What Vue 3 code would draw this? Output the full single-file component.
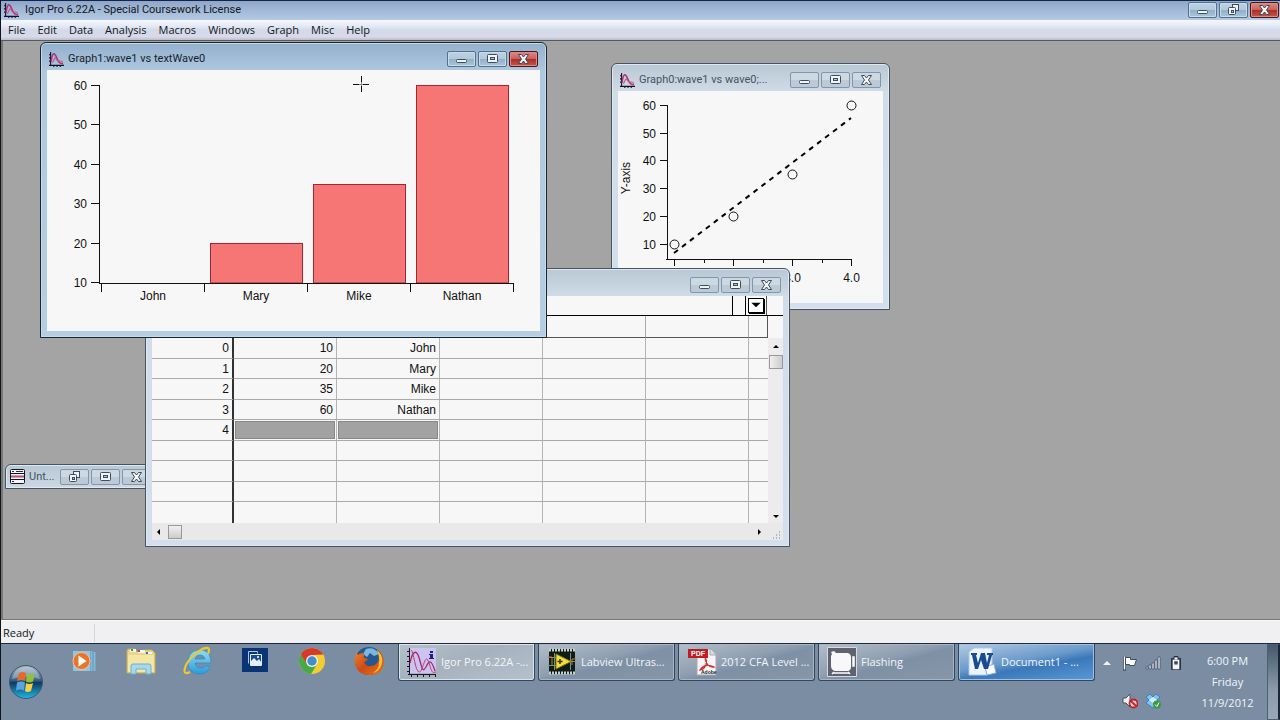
<script setup>
const menus = ['File', 'Edit', 'Data', 'Analysis', 'Macros', 'Windows', 'Graph', 'Misc', 'Help']

const bars = [
  { name: 'John', value: 10 },
  { name: 'Mary', value: 20 },
  { name: 'Mike', value: 35 },
  { name: 'Nathan', value: 60 }
]
const yTicks = [10, 20, 30, 40, 50, 60]
const barY = v => Math.floor(251.9 - v * 3.94) + 0.5
const barX = i => 60.5 + 103 * i

const points = [
  { x: 1, y: 10 },
  { x: 2, y: 20 },
  { x: 3, y: 35 },
  { x: 4, y: 60 }
]
const scatterX = v => 59 * v - 2.5
const scatterY = v => Math.floor(181 - v * 2.78) + 0.5

const rows = [
  { n: 0, value: '10', name: 'John' },
  { n: 1, value: '20', name: 'Mary' },
  { n: 2, value: '35', name: 'Mike' },
  { n: 3, value: '60', name: 'Nathan' },
  { n: 4, value: '', name: '', selected: true },
  {}, {}, {}, {}
]

const tasks = [
  { label: 'Igor Pro 6.22A -...', icon: 'igor', state: 'active' },
  { label: 'Labview Ultras...', icon: 'labview', state: '' },
  { label: '2012 CFA Level ...', icon: 'pdf', state: '' },
  { label: 'Flashing', icon: 'camera', state: '' },
  { label: 'Document1 - ...', icon: 'word', state: 'alert' }
]
const launchers = [
  { id: 'player', label: 'Media Player' },
  { id: 'folder', label: 'Explorer' },
  { id: 'ie', label: 'Internet Explorer' },
  { id: 'pictures', label: 'Pictures' },
  { id: 'chrome', label: 'Chrome' },
  { id: 'firefox', label: 'Firefox' }
]
const controls = [
  { id: 'min', label: 'Minimize' },
  { id: 'max', label: 'Maximize' },
  { id: 'close', label: 'Close' }
]
const restoreControls = [
  { id: 'restore', label: 'Restore' },
  { id: 'max', label: 'Maximize' },
  { id: 'close', label: 'Close' }
]
const appControls = [
  { id: 'min', label: 'Minimize' },
  { id: 'restore', label: 'Restore' },
  { id: 'close', label: 'Close' }
]
</script>

<template>
  <div class="screen">
    <svg class="defs" aria-hidden="true">
      <defs>
        <linearGradient id="orb-fill" x1="0" y1="0" x2="0" y2="1">
          <stop offset="0" stop-color="#a9bccb" />
          <stop offset="0.45" stop-color="#3a6080" />
          <stop offset="0.52" stop-color="#0e3a5c" />
          <stop offset="1" stop-color="#1fb8e8" />
        </linearGradient>
        <linearGradient id="ie-fill" x1="0" y1="0" x2="0" y2="1">
          <stop offset="0" stop-color="#8fdcf6" />
          <stop offset="1" stop-color="#2a9bdc" />
        </linearGradient>
        <linearGradient id="fox-fill" x1="0" y1="0" x2="1" y2="1">
          <stop offset="0" stop-color="#f08a2a" />
          <stop offset="0.5" stop-color="#cf4a14" />
          <stop offset="1" stop-color="#e8781c" />
        </linearGradient>
      </defs>
      <symbol id="g-graph" viewBox="0 0 14 14">
        <path d="M1.500 0v13M0 12.500h14M0 2.500h2M0 5.500h2M0 8.500h2M4.500 12v2M7.500 12v2M10.500 12v2" stroke="#15102a" fill="none" />
        <path d="M2 9C3 0 5 0 7 5s3 6 6 6" stroke="#b03070" fill="none" stroke-width="1.400" />
        <path d="M3 10C5 8 5 3 7 7s4-1 6 3" stroke="#c0588c" fill="none" />
      </symbol>
      <symbol id="g-table" viewBox="0 0 15 15">
        <rect x="0.500" y="0.500" width="14" height="14" rx="1" fill="#f4f4f8" stroke="#141424" />
        <path d="M1 4.500h13M1 10.500h13" stroke="#141424" />
        <path d="M1 7.500h13" stroke="#b05060" stroke-width="2" />
        <path d="M2 2.500h2M6 2.500h7M2 12.500h2" stroke="#29293d" />
      </symbol>
      <symbol id="g-min" viewBox="0 0 27 14">
        <rect x="8.500" y="7.500" width="10" height="3" rx="1" fill="#eef4f8" stroke="#3d4c5c" />
      </symbol>
      <symbol id="g-max" viewBox="0 0 27 14">
        <rect x="8.500" y="2.500" width="10" height="8" rx="1" fill="#eef4f8" stroke="#3d4c5c" />
        <rect x="11.500" y="5.500" width="4" height="2" fill="#b5c5d2" stroke="#3d4c5c" />
      </symbol>
      <symbol id="g-restore" viewBox="0 0 27 14">
        <rect x="12.500" y="1.500" width="6" height="6" fill="#eef4f8" stroke="#3d4c5c" />
        <rect x="8.500" y="4.500" width="7" height="7" rx="1" fill="#eef4f8" stroke="#3d4c5c" />
        <rect x="11.500" y="7.500" width="2" height="2" fill="#b5c5d2" stroke="#3d4c5c" />
      </symbol>
      <symbol id="g-close" viewBox="0 0 27 14">
        <path d="M8.500 2.500h3l2 2.500 2-2.500h3l-3 4.500 3 4.500h-3l-2-2.500-2 2.500h-3l3-4.500z" fill="#f4f6f8" stroke="#3d4a58" />
      </symbol>
      <symbol id="q-player" viewBox="0 0 30 30">
        <path d="M4 5h17v20H4z" fill="#8fc6e4" />
        <path d="M22.500 5v20M25.500 6v19" stroke="#78bde0" stroke-width="2" />
        <circle cx="12.500" cy="15" r="8.500" fill="#e8752a" stroke="#f4c09a" />
        <path d="M9.500 9.500l8 5.500-8 5.500z" fill="#fff" />
      </symbol>
      <symbol id="q-folder" viewBox="0 0 30 30">
        <path d="M1 5q0-2 2-2h6l2 3h6l2-2h7l3 3v20H1z" fill="#e9d789" stroke="#c9ad55" />
        <path d="M4 3h6v3H4zM12 4h7v3h-7zM20 6h6v2h-6z" fill="#faf8ee" />
        <path d="M5 3h2v2H5z" fill="#2f9a4a" /><path d="M12 4h2v2h-2z" fill="#d04030" /><path d="M20 6h2v2h-2z" fill="#3b72c0" />
        <path d="M2 9h26v17H2z" fill="#f4e7a5" />
        <path d="M5 28V20q0-2 2-2h16q2 0 2 2v8h-5v-5H10v5z" fill="#a5d9ee" stroke="#6bb0d0" />
      </symbol>
      <symbol id="q-ie" viewBox="0 0 30 30">
        <path d="M28 17H12q1 5 6 5 3 0 4-2h5q-2 8-10 8C9 28 5 23 5 16S9 4 17 4s11 6 11 13zM12 13h10q-1-4-5-4t-5 4z" fill="url(#ie-fill)" stroke="#3189be" stroke-width="0.700" />
        <path d="M7 26C-2 31 1 19 9 11S26-1 26 4q0 2-1 4" fill="none" stroke="#e9c936" stroke-width="2.200" />
      </symbol>
      <symbol id="q-pictures" viewBox="0 0 30 30">
        <path d="M2 2h26v24H2z" fill="#0b3474" />
        <path d="M8.500 17.500v-12h9v2" stroke="#a8c8ea" fill="none" />
        <path d="M10.500 19.500v-11h11v11z" stroke="#e4effa" fill="#1a4a90" />
        <path d="M11 19v-4l3-3 3 3 2-2 2 3v3z" fill="#e4effa" /><circle cx="18" cy="11" r="1" fill="#fff" />
      </symbol>
      <symbol id="q-chrome" viewBox="0 0 30 30">
        <circle cx="15" cy="15" r="13" fill="#f2cd34" />
        <path d="M3.700 8.500A13 13 0 0 1 26.300 8.500L15 9l-5.500 9z" fill="#d8392d" />
        <path d="M3.700 8.500A13 13 0 0 0 14 28l6.200-10L15 21l-5.200-3z" fill="#48a948" />
        <circle cx="15" cy="15" r="6" fill="#f1f3ee" /><circle cx="15" cy="15" r="4.700" fill="#3f8fcc" />
      </symbol>
      <symbol id="q-firefox" viewBox="0 0 30 30">
        <circle cx="15" cy="15" r="14" fill="#26588f" />
        <path d="M12 3q8-3 13 5l-5 2-4-3-3 4-4-3z" fill="#79b9df" />
        <path d="M3 5q0 3 1 4 3-3 7-1-2 2-1 4l4 1q-2 3-4 3 2 5 7 4 7-1 8-8 0-5-3-9 8 5 8 13-1 13-14 13T1 17Q0 10 3 5z" fill="url(#fox-fill)" />
        <path d="M23 4q8 7 4 16-3 6-8 7 6-4 6-10 1-6-2-13z" fill="#f0c23e" />
      </symbol>
      <symbol id="t-igor" viewBox="0 0 30 30">
        <path d="M3 1h26v25H3z" fill="#cbc4f0" />
        <path d="M2.500 1v26M1 27.500h28M0 4.500h3M0 9.500h3M0 14.500h3M0 19.500h3M0 24.500h3M4.500 27v3M10.500 27v3M16.500 27v3M22.500 27v3M28.500 27v3" stroke="#17142b" fill="none" />
        <path d="M3 16C6 2 10 2 13 14s4 10 7 4 5-3 8 6" stroke="#a82862" fill="none" stroke-width="1.300" />
        <path d="M4 3c3 2 4 21 8 22s6-22 10-9 4 9 7 9" stroke="#bd3d72" fill="none" />
        <path d="M23 4h3v2h-3zM22 7h4v4h1v1h-5v-1h1V8h-1z" fill="#202080" />
      </symbol>
      <symbol id="t-labview" viewBox="0 0 30 30">
        <path d="M2 2h26v25H2z" fill="#111c19" />
        <path d="M2 3h26M2 26h26" stroke="#c5d0c9" stroke-width="3" stroke-dasharray="2 1" />
        <path d="M1 10.500h9M1 18.500h8M20 14.500h9M7.500 6v17M23.500 6v17" stroke="#6d9d62" />
        <path d="M1 10h4v8M29 12h-4v6" stroke="#c96d5a" fill="none" />
        <path d="M9 7l15 7.500L9 22z" fill="#f2df39" stroke="#8b7a12" />
        <path d="M10.500 14.500h5M13 12v5" stroke="#352f0c" stroke-width="1.500" />
      </symbol>
      <symbol id="t-camera" viewBox="0 0 30 30">
        <path d="M0.500 0.500h29v29h-29z" fill="#5e636f" stroke="#d7dbe1" />
        <path d="M5 7l-1-2 3-1 2 2h12q3 1 3 4v10q0 3-3 4H8q-4-1-4-5V9z" fill="#f8f8f8" />
        <path d="M26 10h1v9h-1zM6 26h16M7 25l-2 2M21 25l2 2" fill="none" stroke="#fff" stroke-width="1.500" />
      </symbol>
      <symbol id="t-word" viewBox="0 0 30 30">
        <path d="M2 5l5-4h18v23l-5 4H2z" fill="#eef4fb" stroke="#afc9e3" />
        <path d="M18 20l9-3 2 9-9 2z" fill="#fafcff" stroke="#8cabc9" />
        <path d="M4 6h6v2H9l2 8 3-10h4l2 10 2-8h-2V6h6v2h-1l-4 14h-4l-3-9-3 9H8L5 8H4z" fill="#174b94" />
      </symbol>
    </svg>

    <header class="app-title">
      <svg class="title-icon"><use href="#g-graph" /></svg>
      <h1>Igor Pro 6.22A - Special Coursework License</h1>
      <div class="controls on">
        <button v-for="c in appControls" :key="c.id" type="button" :class="c.id" :aria-label="c.label">
          <svg><use :href="'#g-' + c.id" /></svg>
        </button>
      </div>
    </header>

    <nav class="menubar">
      <button v-for="m in menus" :key="m" type="button">{{ m }}</button>
    </nav>

    <main class="workspace">
      <section class="window win-notes">
        <header class="win-title">
          <svg class="title-icon"><use href="#g-table" /></svg>
          <h2>Unt...</h2>
          <div class="controls">
            <button v-for="c in restoreControls" :key="c.id" type="button" :class="c.id" :aria-label="c.label">
              <svg><use :href="'#g-' + c.id" /></svg>
            </button>
          </div>
        </header>
      </section>

      <section class="window win-scatter">
        <header class="win-title">
          <svg class="title-icon"><use href="#g-graph" /></svg>
          <h2>Graph0:wave1 vs wave0;...</h2>
          <div class="controls">
            <button v-for="c in controls" :key="c.id" type="button" :class="c.id" :aria-label="c.label">
              <svg><use :href="'#g-' + c.id" /></svg>
            </button>
          </div>
        </header>
        <div class="win-body">
          <svg class="plot" viewBox="0 0 265 212" preserveAspectRatio="xMinYMin meet" role="img" aria-label="wave1 vs wave0">
            <path class="axis" d="M49.500 14V168.500M48 168.500H234" />
            <g v-for="t in yTicks" :key="t">
              <path class="axis" :d="`M42 ${scatterY(t)}H49`" />
              <text x="38" :y="scatterY(t) + 4" text-anchor="end">{{ t }}</text>
            </g>
            <g v-for="p in points" :key="p.x">
              <path class="axis" :d="`M${scatterX(p.x)} 168v7`" />
              <path v-if="p.x < 4" class="axis" :d="`M${scatterX(p.x) + 30} 168v4`" />
              <text :x="scatterX(p.x)" y="191" text-anchor="middle">{{ p.x }}.0</text>
            </g>
            <text transform="translate(12 87) rotate(-90)" text-anchor="middle">Y-axis</text>
            <path class="fit" d="M56 162L233 27" />
            <circle v-for="p in points" :key="p.y" class="marker" :cx="scatterX(p.x)" :cy="scatterY(p.y)" r="4.500" />
          </svg>
        </div>
      </section>

      <section class="window win-table">
        <header class="win-title">
          <div class="controls">
            <button v-for="c in controls" :key="c.id" type="button" :class="c.id" :aria-label="c.label">
              <svg><use :href="'#g-' + c.id" /></svg>
            </button>
          </div>
        </header>
        <div class="win-body sheet">
          <div class="entry">
            <input type="text" aria-label="Cell value">
            <span class="entry-gap"></span>
            <div class="entry-menu">
              <button type="button" aria-label="Table menu">
                <svg viewBox="0 0 14 14"><path d="M2 4h10L7 9z" /></svg>
              </button>
            </div>
          </div>
          <div class="grid">
            <table>
              <thead>
                <tr><th class="num"></th><th></th><th></th><th></th><th></th><th></th><th class="last"></th></tr>
              </thead>
              <tbody>
                <tr v-for="(r, i) in rows" :key="i">
                  <td class="num">{{ r.n }}</td>
                  <td :class="{ selected: r.selected }">{{ r.value }}</td>
                  <td :class="{ selected: r.selected }">{{ r.name }}</td>
                  <td></td><td></td><td></td><td class="last"></td>
                </tr>
              </tbody>
            </table>
            <div class="vscroll">
              <svg viewBox="0 0 8 4"><path d="M1 4h6L4 1z" /></svg>
              <i class="thumb"></i>
              <svg class="end" viewBox="0 0 8 4"><path d="M1 0h6L4 3z" /></svg>
            </div>
          </div>
          <div class="hscroll">
            <svg viewBox="0 0 4 8"><path d="M4 1v6L1 4z" /></svg>
            <i class="thumb"></i>
            <svg class="end" viewBox="0 0 4 8"><path d="M0 1v6l3-3z" /></svg>
            <svg class="grip" viewBox="0 0 9 9"><path d="M7 1h1M4 4h1M7 4h1M1 7h1M4 7h1M7 7h1" stroke="#9aa3ab" stroke-width="1.500" /></svg>
          </div>
        </div>
      </section>

      <section class="window win-bars focused">
        <header class="win-title">
          <svg class="title-icon"><use href="#g-graph" /></svg>
          <h2>Graph1:wave1 vs textWave0</h2>
          <div class="controls on">
            <button v-for="c in controls" :key="c.id" type="button" :class="c.id" :aria-label="c.label">
              <svg><use :href="'#g-' + c.id" /></svg>
            </button>
          </div>
        </header>
        <div class="win-body">
          <svg class="plot" viewBox="0 0 493 261" preserveAspectRatio="xMinYMin meet" role="img" aria-label="wave1 vs textWave0">
            <template v-for="(b, i) in bars" :key="b.name">
              <rect v-if="b.value > 10" class="bar" :x="barX(i)" :y="barY(b.value)" width="92" :height="213 - barY(b.value)" />
              <text :x="106 + 103 * i" y="230" text-anchor="middle">{{ b.name }}</text>
            </template>
            <path class="axis" d="M52.500 15V213M52 213.500H467" />
            <path v-for="n in 5" :key="n" class="axis" :d="`M${103 * n - 48.500} 214v8`" />
            <g v-for="t in yTicks" :key="t">
              <path class="axis" :d="`M44 ${barY(t)}H52`" />
              <text x="40" :y="barY(t) + 4" text-anchor="end">{{ t }}</text>
            </g>
          </svg>
        </div>
      </section>

      <svg class="pointer" viewBox="0 0 16 16" aria-hidden="true"><path d="M8.500 0v6M8.500 10v6M0 8.500h6M10 8.500h6" stroke="#111" fill="none" /><path d="M6 8.500h4M8.500 6v4" stroke="#888" /></svg>
    </main>

    <footer class="status"><span>Ready</span></footer>

    <div class="taskbar">
      <button class="start" type="button" aria-label="Start">
        <svg viewBox="0 0 36 36">
          <circle cx="18" cy="18" r="16.500" fill="url(#orb-fill)" stroke="#3f5770" />
          <path d="M4 15Q7 3 18 3t14 12q-14-5-28 0z" fill="#dfe9f0" opacity="0.350" />
          <path d="M11 9q4-2 7 0l-1 8q-4-2-8 0z" fill="#e8682a" />
          <path d="M19 9.500q4 2 8 0l-2 8q-4 2-7 0z" fill="#8fc13c" />
          <path d="M9 18.500q4-2 8 0l-1 8q-4-2-8 0z" fill="#57a5e0" />
          <path d="M18 19q3 2 7 0l-2 8q-4 2-6 0z" fill="#f5d044" />
        </svg>
      </button>
      <div class="launchers">
        <button v-for="l in launchers" :key="l.id" type="button" :aria-label="l.label">
          <svg><use :href="'#q-' + l.id" /></svg>
        </button>
      </div>
      <div class="tasks">
        <button v-for="t in tasks" :key="t.icon" type="button" class="task" :class="t.state">
          <svg v-if="t.icon === 'pdf'" viewBox="0 0 30 30">
            <path d="M10 2h14l5 6v20H10z" fill="#f6f6f8" stroke="#a3a9b2" />
            <path d="M23 2v6h6" fill="#dadde3" stroke="#a3a9b2" />
            <path d="M18 10c3 5 1 12-5 13 3-5 9-6 14-3-5 1-9-4-9-10z" fill="none" stroke="#cf3838" stroke-width="1.300" />
            <path d="M1 2h20v9H1z" fill="#c31d24" />
            <text class="pdf-tag" x="4" y="9">PDF</text>
            <text class="pdf-brand" x="14" y="27">Adobe</text>
          </svg>
          <svg v-else><use :href="'#t-' + t.icon" /></svg>
          <span>{{ t.label }}</span>
        </button>
      </div>
      <div class="tray">
        <svg viewBox="0 0 16 16"><path d="M4 10l4-4 4 4z" fill="#eef2f6" /></svg>
        <svg viewBox="0 0 16 16"><path d="M2.500 1.500v14" stroke="#2f3e4e" stroke-width="3" /><path d="M2.500 1.500v13" stroke="#fff" stroke-width="1.500" /><path d="M3.500 2.500h5v2h6l-2 6h-5v-1h-4z" fill="#fff" stroke="#3c4d5f" /></svg>
        <svg viewBox="0 0 16 16"><path d="M1 12h2v2H1zM4 10h2v4H4zM7 8h2v6H7zM10 5h2v9h-2zM13 2h2v12h-2z" fill="#e6ecf1" stroke="#3c4d5f" stroke-width="0.700" /></svg>
        <svg viewBox="0 0 16 16"><path d="M6 1.500h4v2h2.500v11h-9v-11H6z" fill="#3c4a58" stroke="#263442" /><path d="M5.500 5.500h5v8h-5z" fill="none" stroke="#f4f7f9" stroke-width="1.500" /><path d="M6 9.500h4v4H6zM6.500 2.500h3v2h-3z" fill="#f4f7f9" /></svg>
        <svg class="second" viewBox="0 0 16 16"><path d="M1 5h3l4-4v13l-4-4H1z" fill="#f1f1f1" stroke="#4b5560" /><circle cx="11.500" cy="10.500" r="4" fill="#f1d9d9" stroke="#c3202a" stroke-width="1.800" /><path d="M9 8l5 5" stroke="#c3202a" stroke-width="1.800" /></svg>
        <svg viewBox="0 0 16 16"><path d="M5 1L1 4l3 3-3 3 7 5 7-5-3-3 3-3-4-3-3 3z" fill="#7fc6ee" stroke="#3a84bd" /><path d="M4 7l4-3 4 3-4 3z" fill="#d5eefb" /><circle cx="12" cy="11.500" r="4" fill="#3a9a44" /><path d="M10 11.500l2 2 2-4" stroke="#fff" fill="none" /></svg>
      </div>
      <div class="clock"><span>6:00 PM</span><span>Friday</span><span>11/9/2012</span></div>
      <button class="show-desktop" type="button" aria-label="Show desktop"></button>
    </div>
  </div>
</template>

<style>
body { margin: 0; background: #7b8da3; }
</style>

<style scoped>
.screen {
  display: flex;
  flex-direction: column;
  min-height: 100vh;
  box-sizing: border-box;
  border-left: 1px solid #10151c;
  font: 11px/16px "Open Sans", "Noto Sans", sans-serif;
  color: #111820;
  overflow: hidden;
}
.defs { position: absolute; width: 0; height: 0; }
button { font: inherit; color: inherit; padding: 0; margin: 0; }
h1, h2 { margin: 0; font: 11px/16px Roboto, "Open Sans", sans-serif; white-space: nowrap; }
.title-icon { width: 15px; height: 15px; flex: none; }

.app-title {
  display: flex;
  align-items: center;
  height: 20px;
  box-sizing: border-box;
  gap: 6px;
  padding: 0 1px 1px 3px;
  border-top: 1px solid #10264a;
  background: linear-gradient(#8fa6c8, #a2b9d8 50%, #b4c9e2);
}
.controls { display: flex; gap: 2px; margin-left: auto; }
.controls button {
  width: 29px;
  height: 16px;
  border: 1px solid #8296a8;
  border-radius: 2px;
  background: linear-gradient(#ccd8e2 50%, #bccad7 50%);
  overflow: hidden;
}
.controls svg { display: block; width: 27px; height: 14px; }
.controls.on button {
  border-color: #55708b;
  background: linear-gradient(#bdd2e4, #b1c9dc 50%, #92aec6 50%, #a8c6dc);
  box-shadow: inset 0 0 0 1px #c9dbe8;
}
.controls.on .close {
  border-color: #4a1519;
  background: linear-gradient(#d98b84, #c85f58 50%, #ac2c27 50%, #c4564a);
  box-shadow: inset 0 0 0 1px #dd8c84;
}

.menubar {
  display: flex;
  gap: 12px;
  height: 21px;
  box-sizing: border-box;
  padding-left: 7px;
  border-bottom: 1px solid #565a60;
  background: linear-gradient(#f4f8fd, #e4eaf5 30%, #d4d9e9 50%, #d9d9e9 85%, #b9bcc9);
}
.menubar button { border: 0; background: none; line-height: 20px; }

.workspace {
  position: relative;
  flex: 1;
  min-height: 560px;
  border-left: 2px solid #777;
  background: #a4a4a4;
  overflow: hidden;
}
.window {
  position: absolute;
  display: flex;
  flex-direction: column;
  box-sizing: border-box;
  border: 1px solid #46525e;
  border-radius: 6px 6px 0 0;
  padding: 0 6px 6px;
  background: linear-gradient(#b9c8d5, #d0dce6 28px, #d3dfec);
  box-shadow: inset 0 0 0 1px #dfe9f2;
  color: #47525e;
}
.focused {
  border-color: #1b2530;
  background: linear-gradient(#94b0cb, #aec8df 28px, #b5cee1);
  box-shadow: inset 0 0 0 1px #c3dcec;
  color: #17222e;
}
.win-title {
  display: flex;
  align-items: center;
  height: 27px;
  gap: 4px;
  padding: 5px 2px 0 2px;
  box-sizing: border-box;
}
.win-body { flex: 1; min-height: 0; background: #f7f7f7; }
.win-bars { left: 37px; top: 1px; width: 507px; height: 296px; }
.win-scatter { left: 608px; top: 22px; width: 279px; height: 247px; }
.win-table { left: 142px; top: 227px; width: 645px; height: 279px; }
.win-notes { left: 2px; top: 423px; width: 149px; height: 25px; padding: 0; }
.win-notes .win-title { height: 24px; padding: 0 2px 0 4px; }

.plot { display: block; width: 100%; height: 100%; font: 12px "Liberation Sans", Arial, sans-serif; fill: #111; }
.axis { stroke: #111; fill: none; }
.bar { fill: #f67575; stroke: #a82432; }
.fit { stroke: #000; stroke-width: 2; stroke-dasharray: 5 5; fill: none; }
.marker { fill: none; stroke: #111; }
.pointer { position: absolute; left: 350px; top: 35px; width: 16px; height: 16px; }

.sheet { display: flex; flex-direction: column; }
.entry { display: flex; height: 20px; box-sizing: border-box; border-bottom: 1px solid #000; }
.entry input { flex: 1; min-width: 0; border: 0; border-right: 1px solid #000; padding: 0 4px; background: none; }
.entry-gap { width: 12px; border-right: 1px solid #000; }
.entry-menu { display: flex; width: 21px; margin-right: 16px; box-sizing: border-box; padding: 2px; border-right: 1px solid #555; }
.entry-menu button { width: 16px; height: 15px; border: 1px solid #000; background: #fff; box-shadow: 1px 1px 0 #000; }
.entry-menu svg { display: block; width: 14px; height: 13px; }
.grid { display: flex; flex: 1; min-height: 0; }
table { flex: 1; border-collapse: separate; border-spacing: 0; table-layout: fixed; width: 0; font: 12px/16px "Liberation Sans", Arial, sans-serif; color: #111; }
th, td { box-sizing: border-box; }
th { height: 22px; padding: 0; border-right: 1px solid #aaa; border-bottom: 1px solid #555; }
td { height: 21px; padding: 0 3px 0 0; text-align: right; border-right: 1px solid #b4b4b4; border-bottom: 1px solid #aaa; }
tbody tr:nth-child(even) td { height: 20px; }
.num { width: 82px; border-right: 2px solid #333; }
.last { width: 19px; border-right: 0; }
th.last { border-right: 1px solid #555; }
tbody tr:last-child td { border-bottom: 0; }
td.selected { background: #a2a2a2; box-shadow: inset 0 0 0 1px #f7f7f7, inset 0 0 0 2px #888; }
.vscroll { display: flex; flex-direction: column; align-items: center; width: 15px; margin-top: 22px; padding: 6px 0 4px; box-sizing: border-box; background: #ececee; }
.vscroll svg { width: 8px; height: 4px; }
.thumb { box-sizing: border-box; width: 14px; height: 14px; border: 1px solid #999; background: linear-gradient(90deg, #f0f0f0, #ccc); }
.vscroll .thumb { margin-top: 7px; }
.end { margin-top: auto; }
.hscroll { display: flex; align-items: center; height: 17px; padding: 0 2px 0 4px; background: #e9e9e9; }
.hscroll svg { width: 4px; height: 8px; }
.hscroll .thumb { margin-left: 8px; background: linear-gradient(#f0f0f0, #ccc); }
.hscroll .end { margin: 0 0 0 auto; }
.hscroll .grip { width: 9px; height: 9px; margin-left: 10px; align-self: flex-end; }

.status { height: 22px; border-top: 1px solid #f8f8f8; background: #f0eff1; box-shadow: 0 -1px 0 #777; z-index: 1; }
.status span { display: block; width: 91px; height: 18px; margin-top: 3px; padding-left: 2px; border-right: 1px solid #d5d5da; line-height: 18px; }

.taskbar {
  display: flex;
  height: 77px;
  box-sizing: border-box;
  border-top: 1px solid #1c2a3c;
  background: #7b8da3;
  color: #f1f5f9;
}
.start { width: 36px; height: 36px; margin: 20px 0 0 7px; border: 0; background: none; }
.start svg { display: block; }
.launchers { display: flex; gap: 27px; padding: 2px 0 0 25px; }
.launchers button { width: 30px; height: 30px; border: 0; background: none; }
.launchers button svg, .task svg { display: block; width: 30px; height: 30px; flex: none; }
.tasks { display: flex; gap: 3px; margin-left: 14px; }
.task {
  display: flex;
  align-items: center;
  gap: 4px;
  width: 137px;
  height: 37px;
  padding: 0 0 0 8px;
  border: 1px solid #33475c;
  border-top: 0;
  border-radius: 0 0 3px 3px;
  background: linear-gradient(165deg, #b3bec9, #8e9eb0 45%, #7e90a5 55%, #8797aa);
  box-shadow: inset 0 0 0 1px #a8b5c3;
  white-space: nowrap;
}
.task.active { background: linear-gradient(160deg, #b4c0c9, #a5b2bd 45%, #b5c0cb); box-shadow: inset 0 0 0 1px #dce3e9; }
.task.alert { background: linear-gradient(170deg, #b3cbe3, #6b9acb 45%, #3b78ba 60%, #5a98d6); box-shadow: inset 0 0 0 1px #9fc1e2; }
.pdf-tag { font: bold 7px "Liberation Sans", sans-serif; fill: #fff; }
.pdf-brand { font: bold 5px "Liberation Sans", sans-serif; fill: #222; }
.tray { display: grid; grid-template-columns: repeat(4, 16px); gap: 22px 7px; align-content: start; margin: 11px 0 0 4px; }
.tray svg { width: 16px; height: 16px; }
.tray .second { grid-column: 2; }
.clock { flex: 1; display: flex; flex-direction: column; align-items: center; padding: 6px 0 0 4px; line-height: 21px; }
.show-desktop { width: 13px; border: 1px solid #4b5f75; border-right: 2px solid #1c2733; background: linear-gradient(#46586c, #8a9bb0 60%, #98a8ba); }
</style>
